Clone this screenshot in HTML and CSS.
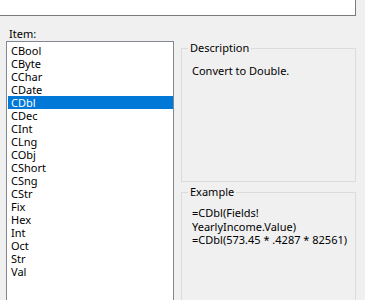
FILE: index.html
```html
<!DOCTYPE html>
<html>
<head>
<meta charset="utf-8">
<link rel="stylesheet" href="styles.css">
</head>
<body>
<div class="topbox"></div>
<div class="main">
  <div class="left">
    <div class="label">Item:</div>
    <div class="list">
      <div class="item">CBool</div>
      <div class="item">CByte</div>
      <div class="item">CChar</div>
      <div class="item">CDate</div>
      <div class="item selected">CDbl</div>
      <div class="item">CDec</div>
      <div class="item">CInt</div>
      <div class="item">CLng</div>
      <div class="item">CObj</div>
      <div class="item">CShort</div>
      <div class="item">CSng</div>
      <div class="item">CStr</div>
      <div class="item">Fix</div>
      <div class="item">Hex</div>
      <div class="item">Int</div>
      <div class="item">Oct</div>
      <div class="item">Str</div>
      <div class="item">Val</div>
    </div>
  </div>
  <div class="right">
    <fieldset class="group desc">
      <legend>Description</legend>
      <div class="gtext">Convert to Double.</div>
    </fieldset>
    <fieldset class="group example">
      <legend>Example</legend>
      <div class="gtext code">=CDbl(Fields!<br>YearlyIncome.Value)<br>=CDbl(573.45 * .4287 * 82561)</div>
    </fieldset>
  </div>
</div>
</body>
</html>
```

FILE: styles.css
```css
html, body {
  margin: 0;
  padding: 0;
  height: 100%;
  overflow: hidden;
}
body {
  background: #f0f0f0;
  font-family: "Noto Sans", "Segoe UI", sans-serif;
  font-size: 11px;
  color: #000;
}
.topbox {
  width: 355px;
  height: 15px;
  background: #fff;
  border-right: 1px solid #7a7a7a;
  border-bottom: 1px solid #7a7a7a;
}
.main {
  display: flex;
  padding: 10px 0 0 6px;
  gap: 7px;
}
.left {
  width: 168px;
  display: flex;
  flex-direction: column;
}
.label {
  height: 15px;
  line-height: 15px;
  padding-left: 3px;
}
.list {
  background: #fff;
  border: 1px solid #828790;
  height: 258px;
  padding: 2px 0 0 1px;
}
.item {
  height: 13px;
  line-height: 13px;
  padding-left: 3px;
  white-space: nowrap;
}
.item.selected {
  background: #0078d7;
  color: #fff;
}
.right {
  width: 175px;
  padding-top: 15px;
  display: flex;
  flex-direction: column;
}
.group {
  margin: 0;
  padding: 0 0 0 10px;
  border: 1px solid #dcdcdc;
  min-width: 0;
}
.group legend {
  line-height: 14px;
  height: 14px;
  padding: 0 2px;
  margin-left: -4px;
}
.desc {
  height: 141px;
  box-sizing: border-box;
}
.desc .gtext {
  padding-top: 9px;
  line-height: 13px;
}
.example {
  margin-top: 3px;
  height: 116px;
  box-sizing: border-box;
}
.example .gtext {
  padding-top: 7px;
  line-height: 13.5px;
  white-space: nowrap;
}
```
